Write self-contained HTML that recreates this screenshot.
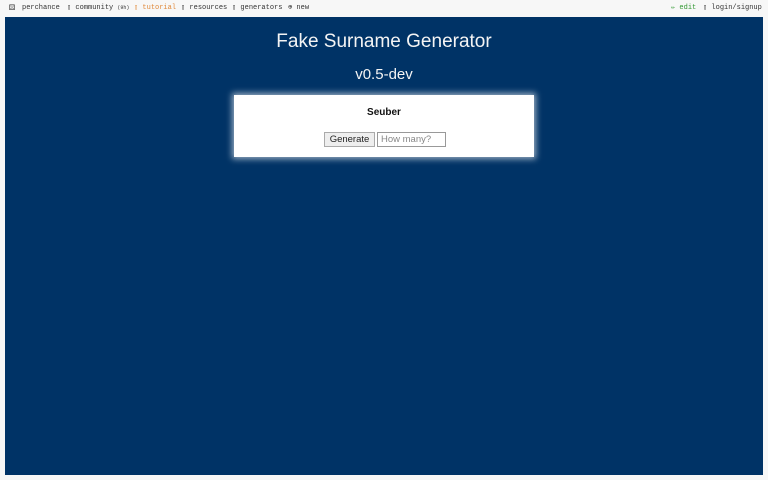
<!DOCTYPE html>
<html><head><meta charset="utf-8"><style>
html,body{margin:0;padding:0;width:768px;height:480px;background:#f7f7f7;overflow:hidden;font-family:"Liberation Sans",sans-serif}
.bar{position:absolute;top:0;left:0;width:768px;height:17px;font-family:"Liberation Mono",monospace;font-size:7px;color:#333;line-height:17px}
.bar span{position:absolute;top:0;white-space:nowrap}
.main{position:absolute;left:5px;top:17px;width:758px;height:458px;background:#003366}
h1{position:absolute;top:14px;left:0;width:758px;text-align:center;margin:0;color:#f4f4f4;font-size:19px;font-weight:normal}
h2{position:absolute;top:49px;left:0;width:758px;text-align:center;margin:0;color:#f4f4f4;font-size:15px;font-weight:normal}
.card{position:absolute;left:229px;top:78px;width:300px;height:62px;background:#fff;box-shadow:0 0 6px 2px rgba(255,255,255,.6)}
.res{position:absolute;top:12px;width:300px;text-align:center;font-size:10px;font-weight:bold;color:#111}
.btn{position:absolute;left:90px;top:37px;width:49px;height:13px;border:1px solid #aaa;background:#eee;font-size:9.5px;line-height:13px;text-align:center;color:#222}
.inp{position:absolute;left:143px;top:37px;width:64px;height:13px;border:1px solid #999;font-size:9.5px;line-height:13px;color:#888;padding-left:3px}
</style></head><body>
<div class="bar">
<span style="left:9px;font-size:10px">⚄</span>
<span style="left:22px">perchance</span>
<span style="left:67px">▯ community <small style="font-size:5px">(9h)</small></span>
<span style="left:134px;color:#e08a3c">▯ tutorial</span>
<span style="left:181px">▯ resources</span>
<span style="left:232px">▯ generators</span>
<span style="left:288px">⊕ new</span>
<span style="left:671px;color:#393">✏ edit</span>
<span style="left:703px">▯ login/signup</span>
</div>
<div class="main">
<h1>Fake Surname Generator</h1>
<h2>v0.5-dev</h2>
<div class="card">
<div class="res">Seuber</div>
<div class="btn">Generate</div>
<div class="inp">How many?</div>
</div>
</div>
</body></html>
